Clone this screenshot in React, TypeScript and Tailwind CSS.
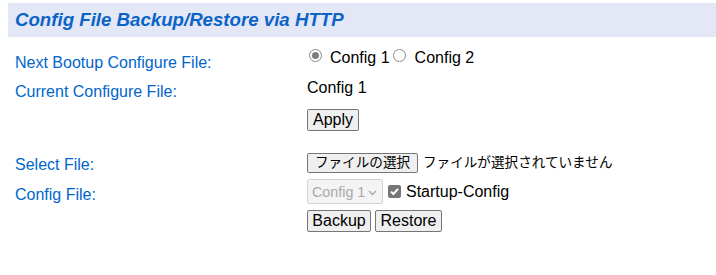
import React from 'react';

const sans = "font-['Liberation_Sans',Arial,sans-serif]";
const jp = "font-['Liberation_Sans','Noto_Sans_CJK_JP',sans-serif]";

function Btn({ label, w }: { label: string; w: string }) {
  return (
    <button
      type="button"
      className={`${w} h-[22px] flex items-center justify-center border border-[#767676] rounded-[2px] bg-[#efefef] text-[16px] leading-[18px] text-black ${sans}`}
    >
      {label}
    </button>
  );
}

function Radio({ checked }: { checked?: boolean }) {
  return (
    <span className="w-[13px] h-[13px] rounded-full border border-[#8a8a8a] bg-white flex items-center justify-center shrink-0">
      {checked && <span className="w-[7px] h-[7px] rounded-full bg-[#7d7d7d]" />}
    </span>
  );
}

export default function App() {
  return (
    <div className={`w-[716px] h-[275px] bg-white pt-[3px] pl-[8px] ${sans}`}>
      <div className="h-[34px] bg-[#e4e7f5] flex items-center pl-[7px]">
        <h1 className="text-[18.67px] leading-[22px] font-bold italic text-[#0a64c8]">
          Config File Backup/Restore via HTTP
        </h1>
      </div>

      <div className="flex pl-[7px]">
        {/* labels */}
        <div className="w-[292px] flex flex-col text-[16px] leading-[18px] text-[#0066cc]">
          <div className="mt-[17px]">Next Bootup Configure File:</div>
          <div className="mt-[11px]">Current Configure File:</div>
          <div className="mt-[55px]">Select File:</div>
          <div className="mt-[12px]">Config File:</div>
        </div>

        {/* values */}
        <div className="flex flex-col text-[16px] leading-[18px] text-black">
          <div className="mt-[12px] h-[18px] flex items-start">
            <span className="ml-[2px]"><Radio checked /></span>
            <span className="ml-[8px]">Config 1</span>
            <span className="ml-[3px]"><Radio /></span>
            <span className="ml-[9px]">Config 2</span>
          </div>
          <div className="mt-[12px]">Config 1</div>
          <div className="mt-[12px] flex">
            <Btn label="Apply" w="w-[52px]" />
          </div>

          <div className="mt-[22px] h-[20px] flex items-center">
            <button
              type="button"
              className={`w-[111px] h-[20px] flex items-center justify-center border border-[#767676] rounded-[2px] bg-[#efefef] text-[13.6px] leading-[16px] text-black ${jp}`}
            >
              ファイルの選択
            </button>
            <span className={`ml-[5px] text-[13.6px] leading-[16px] text-black ${jp}`}>
              ファイルが選択されていません
            </span>
          </div>

          <div className="mt-[6px] h-[25px] flex items-center">
            <div className="w-[76px] h-[25px] border border-[#d3d3d3] rounded-[2px] bg-[#f4f4f4] flex items-center pl-[4px]">
              <span className="whitespace-nowrap text-[14.3px] leading-[16px] text-[#a9a9a9]">Config 1</span>
              <svg width="9" height="6" viewBox="0 0 9 6" className="ml-[3px] mt-[2px] shrink-0">
                <path d="M1 1 L4.5 4.5 L8 1" fill="none" stroke="#a9a9a9" strokeWidth="1.4" />
              </svg>
            </div>
            <span className="ml-[5px] w-[13px] h-[13px] rounded-[2px] bg-[#767676] flex items-center justify-center">
              <svg width="11" height="11" viewBox="0 0 11 11">
                <path d="M2 5.6 L4.4 8 L9 2.8" fill="none" stroke="#fff" strokeWidth="2" />
              </svg>
            </span>
            <span className="ml-[5px]">Startup-Config</span>
          </div>

          <div className="mt-[6px] flex gap-[4px]">
            <Btn label="Backup" w="w-[64px]" />
            <Btn label="Restore" w="w-[67px]" />
          </div>
        </div>
      </div>
    </div>
  );
}
